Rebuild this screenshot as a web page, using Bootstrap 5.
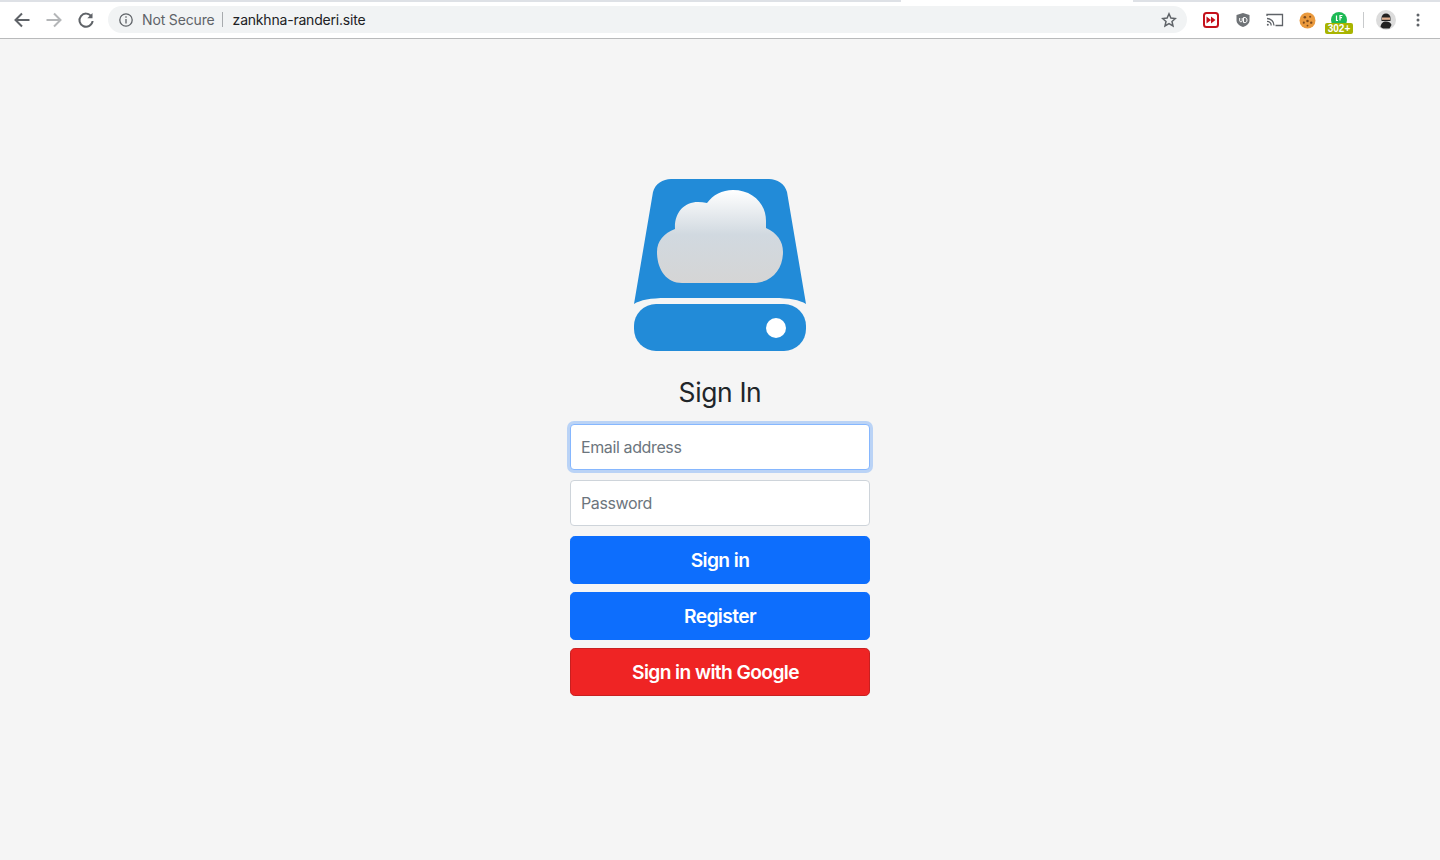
<!DOCTYPE html>
<html lang="en">
<head>
<meta charset="utf-8">
<title>Sign In</title>
<link href="https://cdn.jsdelivr.net/npm/bootstrap@5.3.0/dist/css/bootstrap.min.css" rel="stylesheet">
<style>
html,body{height:860px;overflow:hidden}
body{background:#f5f5f5;font-family:Inter,"Liberation Sans",sans-serif;color:#212529}
.tabstrip{height:2px;background:#dee1e6}
.tabgap{width:232px;height:2px;background:#fff;margin-left:901px}
.toolbar{height:37px;background:#fff;border-bottom:1px solid #b9babb;padding-left:12px}
.tb-ic{width:20px;height:20px;flex:none}
.tb-fwd{margin-left:12px}
.tb-rel{margin-left:12px}
.omni{width:1079px;height:27px;margin-left:12px;margin-top:-1px;background:#f1f3f4;border-radius:14px;padding:0 10px 0 10px;font-size:14px;color:#202124;letter-spacing:-.2px}
.insecure{color:#5f6368;padding-right:7px;border-right:1px solid #a8abae;line-height:15px;margin-left:8px;margin-right:10px;letter-spacing:-.15px}
.exts{margin-left:8px}
.ext-slot{width:32px;height:24px;flex:none}
.ext-lf{height:24px}
.ext-badge{position:absolute;left:2px;bottom:-2px;width:28px;height:11px;border-radius:2px;background:#a8b400;color:#fff;font:700 10px/11px "Liberation Sans",sans-serif;text-align:center}
.ext-sep{width:1px;height:16px;background:#c8cacc;margin:0 6px 0 8px}
.signin{width:300px;margin:140px auto 0}
.signin h1{font-size:26.4px;font-weight:400;line-height:32px;margin:25px 0 16px;letter-spacing:-.35px}
.logo{width:172px;height:172px;display:block}
.form-control.fld{height:46px;font-size:16px;padding:0 10px;border-radius:4px;color:#212529;background:#fff;border-color:#ced4da;letter-spacing:-.38px}
.form-control.fld::placeholder{color:#6c757d}
.form-control.fld.ringed{border-color:#86b7fe;box-shadow:0 0 0 3px rgba(13,110,253,.25)}
.fld-gap{margin-bottom:10px}
.btn.act{height:48px;font-size:19.2px;font-weight:600;line-height:30px;border-radius:4.8px;letter-spacing:-.6px}
.btn-first{margin-top:10px}
.btn-blue{background:#0d6efd;border-color:#0d6efd;color:#fff}
.btn-red{background:#ef2424;border-color:#c82020;color:#fff;padding-right:21px}
</style>
</head>
<body>
<div class="tabstrip"><div class="tabgap"></div></div>
<div class="toolbar d-flex align-items-center">
  <svg class="tb-ic" viewBox="0 0 20 20" fill="none" stroke="#5f6368" stroke-width="2"><path d="M17.500 10H4M10 3.500L3.500 10l6.500 6.500"/></svg>
  <svg class="tb-ic tb-fwd" viewBox="0 0 20 20" fill="none" stroke="#b4b6b8" stroke-width="2"><path d="M2.500 10H16M10 3.500l6.500 6.500-6.500 6.500"/></svg>
  <svg class="tb-ic tb-rel" viewBox="0 0 20 20" fill="none" stroke="#5f6368" stroke-width="2"><path d="M15.500 6.500A6.600 6.600 0 1 0 16.600 11"/><path d="M16.500 3v5.200h-5.200" fill="#5f6368" stroke="none"/></svg>
  <div class="omni d-flex align-items-center">
    <svg width="16" height="16" viewBox="0 0 16 16" fill="none" stroke="#5f6368" stroke-width="1.300"><circle cx="8" cy="8" r="6.200"/><path d="M8 7v4.500M8 4.300v1.500"/></svg>
    <span class="insecure">Not Secure</span>
    <span>zankhna-randeri.site</span>
    <svg class="ms-auto" width="16" height="16" viewBox="0 0 16 16" fill="none" stroke="#5f6368" stroke-width="1.500"><path d="M8 1.800l1.900 4.200 4.500.5-3.400 3 1 4.500L8 11.700 4 14l1-4.500-3.400-3 4.500-.5z"/></svg>
  </div>
  <div class="exts d-flex align-items-center">
    <div class="ext-slot d-flex align-items-center justify-content-center">
      <svg width="16" height="16" viewBox="0 0 16 16"><rect x="1" y="1" width="14" height="14" rx="2.500" fill="#fff" stroke="#c4111b" stroke-width="2"/><path d="M3.500 4.500L8 8 3.500 11.500zM8 4.500L12.500 8 8 11.500z" fill="#c4111b"/></svg>
    </div>
    <div class="ext-slot d-flex align-items-center justify-content-center">
      <svg width="16" height="16" viewBox="0 0 16 16"><path d="M8 1l6.500 2v5.500c0 3-3 5.500-6.500 6.500C4.500 14 1.500 11.500 1.500 8.500V3z" fill="#6f7377"/><path d="M4.700 6v2.800c0 1.400 2.500 1.400 2.500 0V6M8.500 5.500v5c2.800.7 3.500-.8 3.500-2.500S11 5.300 8.500 5.500z" fill="none" stroke="#fff" stroke-width="1"/></svg>
    </div>
    <div class="ext-slot d-flex align-items-center justify-content-center">
      <svg width="18" height="16" viewBox="0 0 18 16" fill="none" stroke="#5f6368" stroke-width="1.300"><path d="M1 4V2.500h15.500v11H9.500"/><path d="M1 6.500a7 7 0 0 1 7 7M1 9.300a4.200 4.200 0 0 1 4.200 4.200"/><circle cx="1.800" cy="12.700" r="1" fill="#5f6368" stroke="none"/></svg>
    </div>
    <div class="ext-slot d-flex align-items-center justify-content-center">
      <svg width="17" height="17" viewBox="0 0 16 16"><circle cx="8" cy="8" r="7.500" fill="#ea9a3e"/><circle cx="5.500" cy="5" r="1.200" fill="#7b4a1e"/><circle cx="10.500" cy="4.500" r="1" fill="#7b4a1e"/><circle cx="8" cy="8.500" r="1.200" fill="#7b4a1e"/><circle cx="4.500" cy="10" r="1" fill="#7b4a1e"/><circle cx="11.500" cy="10" r="1.100" fill="#7b4a1e"/><circle cx="8" cy="12.800" r=".9" fill="#7b4a1e"/></svg>
    </div>
    <div class="ext-slot ext-lf position-relative">
      <svg class="d-block mx-auto mt-1" width="16" height="16" viewBox="0 0 16 16"><circle cx="8" cy="8" r="8" fill="#1db954"/><path d="M5.500 3.500v5H7M9 8.500v-5h2.500M9 5.700h2" fill="none" stroke="#fff" stroke-width="1.200"/></svg>
      <span class="ext-badge">302+</span>
    </div>
    <div class="ext-sep"></div>
    <div class="ext-slot d-flex align-items-center justify-content-center">
      <svg width="20" height="20" viewBox="0 0 20 20"><circle cx="10" cy="10" r="10" fill="#dcdcdc"/><path d="M5.500 8a4.500 4.500 0 0 1 9 0v3h-9z" fill="#222"/><rect x="6" y="7.500" width="8" height="2.300" fill="#e0b090"/><path d="M4.500 17c.3-3.500 2.500-5.500 5.500-5.500s5.200 1.600 5.500 3.500l-2 3.500H7z" fill="#222"/></svg>
    </div>
    <div class="ext-slot d-flex align-items-center justify-content-center">
      <svg width="4" height="14" viewBox="0 0 4 14" fill="#5f6368"><circle cx="2" cy="2" r="1.500"/><circle cx="2" cy="7" r="1.500"/><circle cx="2" cy="12" r="1.500"/></svg>
    </div>
  </div>
</div>

<main class="signin text-center">
  <svg class="logo mx-auto" viewBox="0 0 172 172" role="img" aria-label="Cloud drive logo">
    <defs>
      <linearGradient id="cl" x1="0" y1="0" x2="0" y2="1">
        <stop offset="0" stop-color="#ffffff"/>
        <stop offset=".48" stop-color="#d1d9e0"/>
        <stop offset="1" stop-color="#d5d5d5"/>
      </linearGradient>
    </defs>
    <path d="M19 13C21 5 29 0 37 0H135C143 0 151 5 153 13L172 125C166 121 155 119 140 119H32C17 119 6 121 0 125Z" fill="#228bd8"/>
    <rect x="0" y="125" width="172" height="47" rx="22" fill="#228bd8"/>
    <circle cx="142" cy="149" r="10" fill="#fff"/>
    <path d="M48 104C32 104 23 90 23 73C23 62 30 54 41 50C40 34 50 23 64 23C67 23 70 23.500 73 24C79 16 88 11 99 11C118 11 132 24 132 42C132 45 132 47 132 49C143 54 149 62 149 73C149 90 138 104 119 104Z" fill="url(#cl)"/>
  </svg>
  <h1>Sign In</h1>
  <form class="d-flex flex-column">
    <input type="email" class="form-control fld ringed fld-gap" placeholder="Email address" aria-label="Email address">
    <input type="password" class="form-control fld" placeholder="Password" aria-label="Password">
    <button type="button" class="btn act btn-blue btn-first w-100">Sign in</button>
    <button type="button" class="btn act btn-blue w-100 mt-2">Register</button>
    <button type="button" class="btn act btn-red w-100 mt-2">Sign in with Google</button>
  </form>
</main>
</body>
</html>
